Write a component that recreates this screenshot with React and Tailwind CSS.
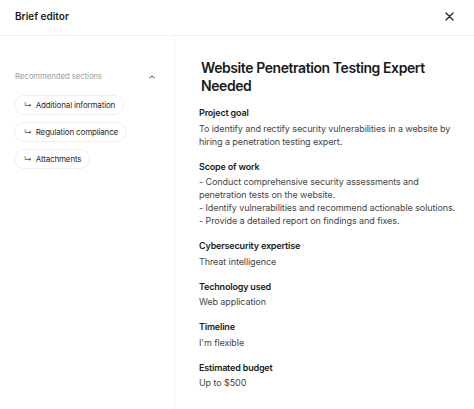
import React from "react";

const sections = [
  { h: "Cybersecurity expertise", v: "Threat intelligence" },
  { h: "Technology used", v: "Web application" },
  { h: "Timeline", v: "I'm flexible" },
  { h: "Estimated budget", v: "Up to $500" },
];

function Pill({ children }) {
  return (
    <div className="flex h-[20px] w-fit items-center gap-[4px] whitespace-nowrap rounded-full border border-[#eeeeee] pl-[9px] pr-[8px] text-[8px] tracking-[-0.02em] text-[#2a2a2a]">
      <span className="text-[8px] text-[#555]">↳</span>
      <span>{children}</span>
    </div>
  );
}

function Heading({ children }) {
  return <div className="text-[9px] font-semibold leading-[14px] tracking-[-0.02em] text-[#1a1a1a]">{children}</div>;
}

function Body({ children }) {
  return <div className="mt-[1.5px] text-[9px] leading-[13px] tracking-[-0.01em] text-[#454545]">{children}</div>;
}

export default function App() {
  return (
    <div className="h-[409px] w-[474px] overflow-hidden bg-white text-[#222]" style={{ fontFamily: "Inter, 'Noto Sans', sans-serif" }}>
      <div className="flex h-[36px] items-center justify-between border-b border-[#f2f2f2] pb-[3px] pl-[15px] pr-[20px]">
        <div className="text-[10px] font-semibold text-[#1a1a1a]">Brief editor</div>
        <svg width="9" height="9" viewBox="0 0 9 9" fill="none" stroke="#222" strokeWidth="1.3" strokeLinecap="round">
          <path d="M1 1L8 8M8 1L1 8" />
        </svg>
      </div>
      <div className="flex h-[373px]">
        <div className="w-[175px] shrink-0 border-r border-[#f2f2f2] pl-[14px] pr-[18px] pt-[35px]">
          <div className="flex h-[12px] items-center justify-between pl-[1px]">
            <span className="text-[7.8px] tracking-[-0.01em] text-[#a0a0a0]">Recommended sections</span>
            <svg width="8" height="6" viewBox="0 0 8 6" fill="none" stroke="#888" strokeWidth="1.1" strokeLinecap="round" strokeLinejoin="round">
              <path d="M1.8 4L4 1.8L6.2 4" />
            </svg>
          </div>
          <div className="mt-[12px] flex flex-col gap-[7px]">
            <Pill>Additional information</Pill>
            <Pill>Regulation compliance</Pill>
            <Pill>Attachments</Pill>
          </div>
        </div>
        <div className="flex-1 pl-[24px] pr-[12px] pt-[23px]">
          <h1 className="pl-[2px] text-[14px] font-semibold leading-[18px] tracking-[-0.03em] text-[#1a1a1a]">
            Website Penetration Testing Expert Needed
          </h1>
          <div className="mt-[11px]">
            <Heading>Project goal</Heading>
            <Body>To identify and rectify security vulnerabilities in a website by hiring a penetration testing expert.</Body>
          </div>
          <div className="mt-[12px]">
            <Heading>Scope of work</Heading>
            <Body>
              <div>- Conduct comprehensive security assessments and penetration tests on the website.</div>
              <div>- Identify vulnerabilities and recommend actionable solutions.</div>
              <div>- Provide a detailed report on findings and fixes.</div>
            </Body>
          </div>
          {sections.map((s) => (
            <div key={s.h} className="mt-[12px]">
              <Heading>{s.h}</Heading>
              <Body>{s.v}</Body>
            </div>
          ))}
        </div>
      </div>
    </div>
  );
}
